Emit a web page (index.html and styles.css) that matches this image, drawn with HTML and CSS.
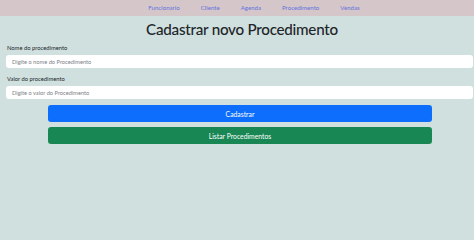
FILE: index.html
```html
<!DOCTYPE html>
<html lang="pt-BR">
<head>
<meta charset="utf-8">
<title>Cadastrar novo Procedimento</title>
<link rel="stylesheet" href="styles.css">
</head>
<body>
<nav class="topnav">
  <a href="#" class="nav-link">Funcionario</a>
  <a href="#" class="nav-link">Cliente</a>
  <a href="#" class="nav-link">Agenda</a>
  <a href="#" class="nav-link">Procedimento</a>
  <a href="#" class="nav-link">Vendas</a>
</nav>
<main class="page">
  <h1 class="title">Cadastrar novo Procedimento</h1>
  <form class="form">
    <label class="field-label" for="nome">Nome do procedimento</label>
    <input class="field-input" id="nome" type="text" placeholder="Digite o nome do Procedimento">
    <label class="field-label" for="valor">Valor do procedimento</label>
    <input class="field-input" id="valor" type="text" placeholder="Digite o valor do Procedimento">
    <div class="actions">
      <button type="button" class="btn btn-primary">Cadastrar</button>
      <button type="button" class="btn btn-success">Listar Procedimentos</button>
    </div>
  </form>
</main>
</body>
</html>
```
FILE: styles.css
```css
* { box-sizing: border-box; }
html, body { margin: 0; padding: 0; }
html { background: #d0e0df; }
body {
  background: #d0e0df;
  font-family: Lato, "Noto Sans", sans-serif;
  color: #212529;
  width: 474px;
  height: 220px;
  overflow: hidden;
}
.topnav {
  background: #d5c6ca;
  height: 16px;
  display: flex;
  justify-content: center;
  align-items: center;
  gap: 21px;
  padding-left: 34px;
}
.nav-link {
  color: #6474dc;
  text-decoration: none;
  font-size: 6.1px;
  line-height: 16px;
}
.page {
  padding: 0 1px 0 6px;
}
.title {
  margin: 3px 0 4px;
  text-align: center;
  font-size: 15.2px;
  font-weight: 500;
  letter-spacing: -0.25px;
  line-height: 20px;
  padding-left: 5px;
}
.form {
  display: flex;
  flex-direction: column;
}
.field-label {
  font-size: 5.8px;
  line-height: 9px;
  padding-left: 1px;
  margin-bottom: 3px;
}
.field-input {
  height: 13px;
  border: none;
  border-radius: 3px;
  background: #fff;
  padding: 0 6px;
  font-family: inherit;
  font-size: 5.7px;
  margin-bottom: 6px;
}
.field-input::placeholder { color: #7d8287; }
.actions {
  display: flex;
  flex-direction: column;
  gap: 5px;
  margin: 0 41px 0 42px;
}
.btn {
  height: 17px;
  border: none;
  border-radius: 3px;
  color: #fff;
  font-family: inherit;
  font-size: 6.8px;
  padding: 0;
}
.btn-primary { background: #0d6efd; }
.btn-success { background: #198754; }
```
